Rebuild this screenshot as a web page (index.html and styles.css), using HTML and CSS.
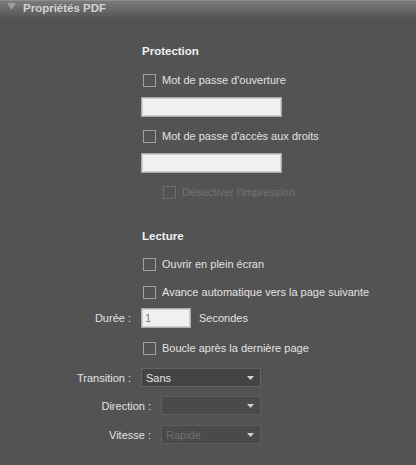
FILE: index.html
```html
<!DOCTYPE html>
<html lang="fr">
<head>
    <meta charset="UTF-8">
    <title>Propriétés PDF</title>
    <link rel="stylesheet" href="styles.css">
</head>
<body>
    <div class="panel-header">
        <svg class="twisty" width="9" height="7" viewBox="0 0 9 7"><path d="M0 0H9L4.5 7Z" fill="#9c9c9c"/></svg>
        <span class="panel-title">Propriétés PDF</span>
    </div>

    <div class="panel-body">
        <!-- Protection -->
        <div class="group-title first">Protection</div>
        <label class="check-row cb1"><input type="checkbox"> Mot de passe d'ouverture</label>
        <input class="text-field pw1" type="text">
        <label class="check-row cb2"><input type="checkbox"> Mot de passe d'accès aux droits</label>
        <input class="text-field pw2" type="text">
        <label class="check-row disabled cb3"><input type="checkbox" disabled> Désactiver l'impression</label>

        <!-- Lecture -->
        <div class="group-title second">Lecture</div>
        <label class="check-row cb4"><input type="checkbox"> Ouvrir en plein écran</label>
        <label class="check-row cb5"><input type="checkbox"> Avance automatique vers la page suivante</label>

        <div class="field duree">
            <span class="field-label">Durée :</span>
            <input class="text-field small" type="text" value="1">
            <span class="unit">Secondes</span>
        </div>

        <label class="check-row cb6"><input type="checkbox"> Boucle après la dernière page</label>

        <div class="field trans">
            <span class="field-label">Transition :</span>
            <div class="dropdown wide"><span>Sans</span><svg width="7" height="4" viewBox="0 0 7 4"><path d="M0 0H7L3.5 4Z" fill="#cfcfcf"/></svg></div>
        </div>
        <div class="field sub dir">
            <span class="field-label">Direction :</span>
            <div class="dropdown off"><span></span><svg width="7" height="4" viewBox="0 0 7 4"><path d="M0 0H7L3.5 4Z" fill="#cfcfcf"/></svg></div>
        </div>
        <div class="field sub speed">
            <span class="field-label">Vitesse :</span>
            <div class="dropdown off"><span>Rapide</span><svg width="7" height="4" viewBox="0 0 7 4"><path d="M0 0H7L3.5 4Z" fill="#cfcfcf"/></svg></div>
        </div>
    </div>
</body>
</html>
```

FILE: styles.css
```css
body {
    margin: 0;
    background-color: #535353;
    font-family: "Liberation Sans", Arial, sans-serif;
    font-size: 11px;
    color: #e2e2e2;
    height: 465px;
    overflow: hidden;
}

/* Barre de titre du panneau */
.panel-header {
    height: 18px;
    display: flex;
    align-items: center;
    border-top: 1px solid #8e8e8e;
    box-sizing: border-box;
    background: linear-gradient(#7a7a7a, #5c5c5c 85%, #545454);
}

.twisty {
    margin-left: 7px;
    margin-top: -7px;
}

.panel-title {
    margin-left: 7px;
    margin-top: -3px;
    font-size: 11.5px;
    font-weight: bold;
    color: #d2d2d2;
}

.panel-body {
    display: flex;
    flex-direction: column;
    align-items: flex-start;
}

.group-title {
    margin-left: 142px;
    font-size: 11.5px;
    font-weight: bold;
    line-height: 14px;
    color: #f0f0f0;
}

.group-title.first { margin-top: 26px; }
.group-title.second { margin-top: 27px; }

.check-row {
    display: flex;
    align-items: center;
    height: 20px;
    margin-left: 143px;
    white-space: nowrap;
}

.check-row input {
    appearance: none;
    width: 13px;
    height: 13px;
    margin: 0 6px 0 0;
    border: 1px solid #a0a0a0;
    background: transparent;
    box-sizing: border-box;
}

.check-row.disabled {
    margin-left: 163px;
    color: #737373;
}

.check-row.disabled input {
    border-color: #6c6c6c;
}

.cb1 { margin-top: 12px; }
.cb2 { margin-top: 9px; }
.cb3 { margin-top: 9px; }
.cb4 { margin-top: 11px; }
.cb5 { margin-top: 8px; }
.cb6 { margin-top: 10px; }

.text-field {
    width: 141px;
    height: 20px;
    margin: 7px 0 0 141px;
    padding: 0 3px;
    box-sizing: border-box;
    border: 1px solid #aaaaaa;
    box-shadow: inset 0 0 0 1px #d2d2d2;
    background: #f0f0f0;
    font-family: inherit;
    font-size: 11px;
    color: #7a7a7a;
    outline: none;
}

.field {
    display: flex;
    align-items: center;
}

.field-label {
    width: 131px;
    text-align: right;
    margin-right: 10px;
    white-space: nowrap;
}

.field.sub .field-label {
    width: 151px;
}

.field .text-field {
    margin: 0;
}

.text-field.small {
    width: 50px;
}

.unit {
    margin-left: 8px;
}

.duree { margin-top: 6px; }
.trans { margin-top: 10px; }
.dir { margin-top: 9px; }
.speed { margin-top: 10px; }

.dropdown {
    display: flex;
    align-items: center;
    justify-content: space-between;
    height: 19px;
    padding: 0 6px 0 4px;
    box-sizing: border-box;
    border: 1px solid #626262;
    background: #444444;
}

.dropdown.wide { width: 120px; }

.dropdown.off {
    width: 100px;
    background: #4a4a4a;
    border-color: #5e5e5e;
    color: #707070;
}
```
